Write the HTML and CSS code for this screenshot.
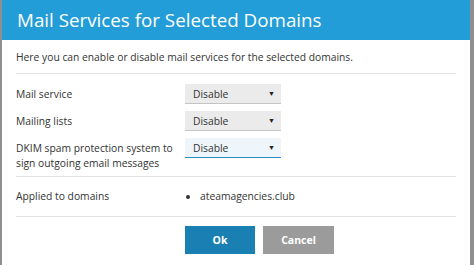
FILE: index.html
```html
<!DOCTYPE html>
<html>

<head>
    <title>Mail Services for Selected Domains</title>
    <link rel="stylesheet" href="styles.css">
</head>

<body>
    <div class="dialog">
        <div class="dialog-header">
            <h2>Mail Services for Selected Domains</h2>
        </div>
        <div class="dialog-body">
            <p class="hint">Here you can enable or disable mail services for the selected domains.</p>

            <div class="section">
                <div class="row">
                    <label class="row-label">Mail service</label>
                    <div class="select"><span>Disable</span><span class="arrow">&#9660;</span></div>
                </div>
                <div class="row">
                    <label class="row-label">Mailing lists</label>
                    <div class="select"><span>Disable</span><span class="arrow">&#9660;</span></div>
                </div>
                <div class="row">
                    <label class="row-label">DKIM spam protection system to sign outgoing email messages</label>
                    <div class="select focused"><span>Disable</span><span class="arrow">&#9660;</span></div>
                </div>
            </div>

            <div class="section domains">
                <div class="row">
                    <span class="row-label">Applied to domains</span>
                    <ul class="domain-list">
                        <li>ateamagencies.club</li>
                    </ul>
                </div>
            </div>

            <div class="buttons">
                <button class="btn btn-ok">Ok</button>
                <button class="btn btn-cancel">Cancel</button>
            </div>
        </div>
    </div>
</body>

</html>
```

FILE: styles.css
```css
body {
    font-family: "Open Sans", sans-serif;
    margin: 0;
    padding: 0 4px 0 2px;
    background: #8f8f8f;
    color: #333;
    font-size: 10.3px;
}

.dialog {
    background: #fff;
    height: 265px;
}

.dialog-header {
    background: #229dd7;
    height: 40px;
    padding-left: 15px;
    display: flex;
    align-items: center;
}

.dialog-header h2 {
    margin: 0;
    color: #fff;
    font-size: 18.8px;
    font-weight: normal;
}

.dialog-body {
    padding: 0 14px;
}

.hint {
    margin: 0;
    padding: 8px 0 7px;
    line-height: 18px;
    border-bottom: 1px solid #e2e2e2;
}

.section {
    padding: 10px 0 5px;
    border-bottom: 1px solid #e2e2e2;
    display: flex;
    flex-direction: column;
    gap: 7px;
}

.row {
    display: flex;
    align-items: flex-start;
}

.row-label {
    width: 169px;
    flex-shrink: 0;
    line-height: 15px;
    padding-top: 3px;
    padding-right: 8px;
    box-sizing: border-box;
}

.select {
    width: 96px;
    height: 20px;
    box-sizing: border-box;
    background: #ebebeb;
    border-bottom: 1px solid #c4c4c4;
    display: flex;
    justify-content: space-between;
    align-items: center;
    padding: 0 6px 0 8px;
}

.select.focused {
    background: #eef6fb;
    border-bottom-color: #2a8fc4;
}

.arrow {
    font-size: 7px;
    color: #222;
}

.domains {
    padding: 9px 0 12px;
}

.domain-list {
    margin: 0;
    padding: 3px 0 0 15px;
    line-height: 15px;
}

.buttons {
    padding-top: 9px;
    padding-left: 169px;
    display: flex;
    gap: 8px;
}

.btn {
    height: 28px;
    border: none;
    color: #fff;
    font-family: "Open Sans", sans-serif;
    font-size: 10.5px;
    font-weight: bold;
    cursor: pointer;
}

.btn-ok {
    width: 70px;
    background: #1a7fb2;
}

.btn-cancel {
    width: 71px;
    background: #9b9b9b;
}
```
